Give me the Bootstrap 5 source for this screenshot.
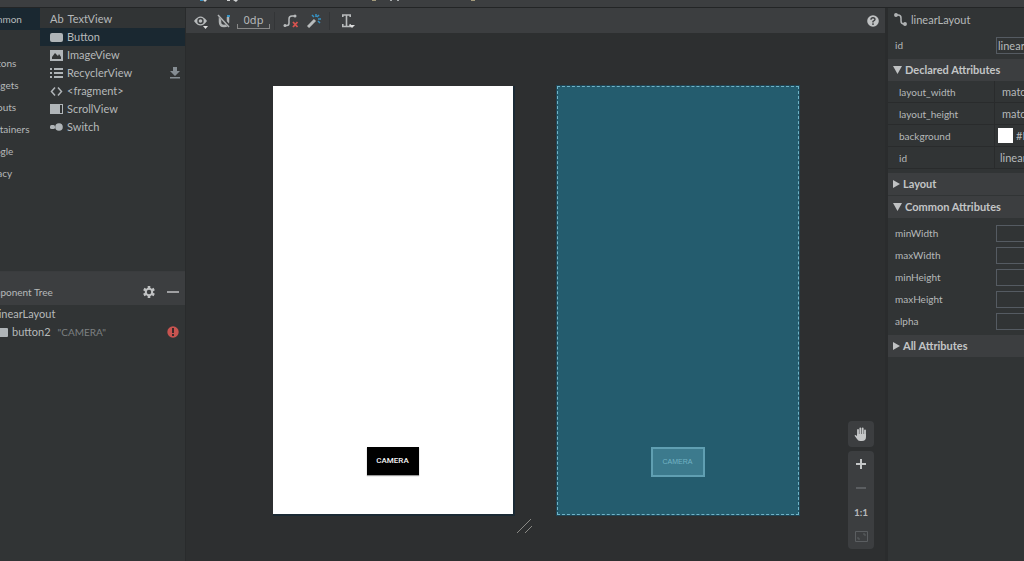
<!DOCTYPE html>
<html lang="en">
<head>
<meta charset="utf-8">
<meta name="viewport" content="width=device-width, initial-scale=1">
<title>Layout Editor</title>
<link href="https://cdn.jsdelivr.net/npm/bootstrap@5.3.0/dist/css/bootstrap.min.css" rel="stylesheet">
<style>
:root{--panel:#313435;--bar:#3c3e40;--dark:#2d2f30;--line:#292b2c;--fg:#b6b9ba;--sel:#1a2831}
body{background:var(--dark);color:var(--fg);font:11px/18px Lato,"Noto Sans",sans-serif;overflow:hidden}
button{border:0;background:none;color:inherit;padding:0;text-align:left}
svg{display:block;flex:none}
.topbar{height:8px;background:var(--bar);border-bottom:1px solid #232526;flex:none;overflow:hidden;padding-left:196px}
.side-l{width:186px;background:var(--panel);border-right:1px solid #292b2c;flex:none}
.side-r{width:139px;background:var(--panel);border-left:3px solid #2a2c2d;flex:none}
.palette{height:263px}
.cats{width:40px;flex:none}
.cats button,.cats .blank{display:block;width:64px;height:22px;margin-left:-18px;font-size:10px;line-height:22px}
.cats .on,.comps .on{background:var(--sel)}
.comps{padding-top:2px}
.comps button{height:18px;padding-left:10px;gap:4px;width:100%}
.tree-head{height:34px;background:var(--bar);border-top:1px solid #3a3c3e;font-size:10px;padding-top:7px}
.tree-head span{margin-left:-20px}
.tree-row{height:18px}
.tree-root{margin-left:-7px}
.hint{color:#7d8082;font-size:10px;margin-left:7px}
.err{margin-right:6px}
.tools{height:25px;background:var(--bar);flex:none}
.tools .gap-s{margin-left:6px}
.help{margin-right:6px}
.sep{width:1px;height:18px;background:#333537}
.margin-btn{width:33px;height:16px;text-align:center;border-bottom:1px solid #888;background:linear-gradient(#888,#888) left bottom/1px 4px no-repeat,linear-gradient(#888,#888) right bottom/1px 4px no-repeat;font:11px/14px "Noto Sans",sans-serif}
.canvas{padding-top:53px;gap:44px;background:var(--dark)}
.device{width:240px;height:428px;background:#fff;box-shadow:1px 1px 0 1px #1b2a34}
.blueprint{width:242px;height:429px;background:#245c6e;border:1px dashed #6fb4c8;outline:1px solid #1f4454}
.cam{bottom:39px;left:50%;transform:translateX(-50%);width:52px;height:28px;background:#000;color:#f4f4f4;font:500 8px/28px Roboto,sans-serif;text-align:center;box-shadow:0 1px 1px #999}
.blueprint .cam{bottom:37px;width:54px;height:30px;background:#3c7a8d;color:#72b3c4;font-family:"Liberation Sans",sans-serif;font-size:7px;line-height:26px;border:2px solid #609fb2;box-shadow:none}
.grip{left:243px;top:430px}
.zoomer{right:11px;bottom:12px;gap:4px}
.zoomer>div{background:#3c3e40;border-radius:4px;width:26px;padding:1px 0}
.zoomer button{width:26px;height:24px;display:flex;align-items:center;justify-content:center;font-weight:700;font-size:10px}
.root-name{height:23px;padding-left:6px;gap:4px}
.sect{display:flex;align-items:center;gap:3px;width:100%;height:22px;background:var(--bar);font-weight:700;padding-left:5px;color:#c3c5c6}
.attr{height:22px;font-size:10px;display:flex;align-items:center;border-bottom:1px solid var(--line);padding-left:11px}
.attr .lbl{width:95px;flex:none}
.attr .val{border-left:1px solid var(--line);height:21px;line-height:21px;padding-left:7px;font-size:11px}
.attr .sw{padding-left:3px;gap:3px}
.attr .idv{padding-left:5px}
.attr,.attr .val,.field label{white-space:nowrap}
.field{height:22px;display:flex;align-items:center;padding-left:7px;font-size:10px}
.field label{width:101px;flex:none}
.field input{width:160px;height:17px;flex:none;background:var(--panel);border:1px solid #555b62;color:var(--fg);padding:0 1px;font-size:11px;line-height:15px;border-radius:0}
.idrow{height:28px}
.swatch{width:15px;height:15px;background:#fff}
.common{margin-top:1px}
.fields{padding:4px 0 3px}
</style>
</head>
<body class="d-flex flex-column vh-100">
<div class="topbar"><svg width="290" height="7"><path d="M4 0h3v1H4z" fill="#3592c4"/><path d="M7 0h4L9 2zM31 0h3v1h-3zM37 0h5l-2 2z" fill="#d0d2d3"/><path d="M176 0h4v1h-4zM275 0h4v1h-4z" fill="#a39a7c"/><path d="M194 0h2v1h-2zM201 0h2v1h-2z" fill="#a8acae"/></svg></div>
<main class="d-flex flex-grow-1">
  <aside class="side-l d-flex flex-column overflow-hidden">
    <section class="palette d-flex">
      <div class="cats overflow-hidden">
        <button class="on">Common</button>
        <div class="blank"></div>
        <button>Buttons</button><button>Widgets</button><button>Layouts</button><button>Containers</button><button>Google</button><button>Legacy</button>
      </div>
      <div class="comps flex-grow-1">
        <button class="d-flex align-items-center"><span>Ab</span>TextView</button>
        <button class="on d-flex align-items-center"><svg width="13" height="10"><rect width="13" height="9" y="1" rx="2" fill="#b0b5b8"/></svg>Button</button>
        <button class="d-flex align-items-center"><svg width="13" height="11"><path fill="#b0b5b8" fill-rule="evenodd" d="M0 0h13v11H0zM2 9h9V7L9 4 8 6 5 3 2 7z"/></svg>ImageView</button>
        <button class="d-flex align-items-center"><svg width="13" height="10"><path fill="#b0b5b8" d="M0 0h2v2H0zM4 0h9v2H4zM0 4h2v2H0zM4 4h9v2H4zM0 8h2v2H0zM4 8h9v2H4z"/></svg>RecyclerView<svg class="ms-auto me-1" width="12" height="12"><path fill="#858d93" d="M4 0h4v4h3L6 9 1 4h3zM1 10h10v1.500H1z"/></svg></button>
        <button class="d-flex align-items-center"><svg width="13" height="9" fill="none" stroke="#b0b5b8" stroke-width="1.500"><path d="M5 .5 1.500 4.500 5 8.500M8 .5l3.500 4L8 8.500"/></svg>&lt;fragment&gt;</button>
        <button class="d-flex align-items-center"><svg width="13" height="10"><path fill="#b0b5b8" fill-rule="evenodd" d="M0 0h13v10H0zM10 1h2v8h-2z"/></svg>ScrollView</button>
        <button class="d-flex align-items-center"><svg width="13" height="8" fill="#b0b5b8"><rect y="2" width="5" height="4" rx="1.500"/><circle cx="9" cy="4" r="3.800"/></svg>Switch</button>
      </div>
    </section>
    <section>
      <header class="tree-head d-flex align-items-center">
        <span>Component Tree</span>
        <button class="ms-auto" aria-label="Settings"><svg width="12" height="12" viewBox="-6 -6 12 12"><path d="M0-6V6M-5.200-3 5.200 3M-5.200 3 5.200-3" stroke="#c0c2c3" stroke-width="2.600"/><circle r="3.200" fill="#3c3e40" stroke="#c0c2c3" stroke-width="2"/></svg></button>
        <button class="ms-2 ps-1 err" aria-label="Hide"><svg width="12" height="12"><path d="M0 6h12" stroke="#c0c2c3" stroke-width="1.500"/></svg></button>
      </header>
      <div class="tree-row d-flex"><span class="tree-root">LinearLayout</span></div>
      <div class="tree-row d-flex align-items-center"><svg width="8" height="9"><rect x="-4" width="12" height="9" rx="1" fill="#b0b5b8"/></svg><span class="ms-1">button2</span><span class="hint">"CAMERA"</span>
        <svg class="ms-auto err" width="12" height="12"><circle cx="6" cy="6" r="5.700" fill="#c75450"/><path d="M6 2v5M6 8v2" stroke="#3a2b2c" stroke-width="2"/></svg></div>
    </section>
  </aside>
  <section class="d-flex flex-column flex-grow-1 position-relative">
    <div class="tools d-flex align-items-center">
      <button class="ms-2" aria-label="View options"><svg width="15" height="16"><path d="M0 8q6.500-9 13 0-6.500 9-13 0z" fill="#b8bbbc"/><circle cx="6.500" cy="8" r="3.200" fill="#3c3e40"/><circle cx="6.500" cy="8" r="1.800" fill="#b8bbbc"/><path d="M9 13h5l-2.500 3z" fill="#ddd"/></svg></button>
      <button class="ms-2" aria-label="Autoconnect off"><svg width="14" height="14" fill="none"><path d="M3 3v5q0 4 4 4t4-4V3" stroke="#b0b3b4" stroke-width="2.500"/><path d="M1 0 13 13" stroke="#3c3e40" stroke-width="3"/><path d="M1 1 12 13" stroke="#b0b3b4" stroke-width="1.500"/><path d="M10 2h3" stroke="#3592c4" stroke-width="2"/></svg></button>
      <button class="margin-btn gap-s">0dp</button>
      <i class="sep ms-1"></i>
      <button class="ms-2" aria-label="Clear constraints"><svg width="16" height="14" fill="none"><path d="M1 11.500h3q2 0 2-2.500V5q0-3 3-3h3" stroke="#b8bbbc" stroke-width="1.500"/><circle cx="2" cy="11.500" r="1.500" fill="#b8bbbc"/><circle cx="12" cy="2" r="1.500" fill="#b8bbbc"/><path d="m10 8 4.500 5M14.500 8 10 13" stroke="#d9534f" stroke-width="1.800"/></svg></button>
      <button class="ms-2" aria-label="Infer constraints"><svg width="14" height="14"><path d="m1 13 7-7" stroke="#b8bbbc" stroke-width="3"/><path d="M9 0v3M12 1l-2 2M11 5h3M5 1l2 2M11 7l2 2" stroke="#3592c4" stroke-width="1.500"/></svg></button>
      <i class="sep ms-2"></i>
      <button class="ms-2 ps-1" aria-label="Guidelines"><svg width="13" height="16" fill="none"><path d="M.8 4V2h7.400v2M.8 11v2.500h7.400V11M4.500 2v11" stroke="#b8bbbc" stroke-width="1.600"/><path d="M7 12h6l-3 3z" fill="#ddd"/></svg></button>
      <button class="ms-auto help" aria-label="Help"><svg width="12" height="12"><circle cx="6" cy="6" r="5.800" fill="#c0c2c3"/><path d="M4 4.800q0-2 2-2t2 1.800q0 1-2 1.800v1M6 8.300V10" fill="none" stroke="#3c3e40" stroke-width="1.400"/></svg></button>
    </div>
    <div class="canvas d-flex flex-grow-1 justify-content-center align-items-start">
      <div class="device position-relative"><button class="cam position-absolute">CAMERA</button>
        <svg class="grip position-absolute" width="18" height="18" stroke="#8a8a86" stroke-width="1"><path d="M1 17 15 3M9 17l7-7"/></svg></div>
      <div class="blueprint position-relative"><button class="cam position-absolute">CAMERA</button></div>
    </div>
    <div class="zoomer position-absolute d-flex flex-column">
      <div><button aria-label="Pan"><svg width="14" height="15" viewBox="0 0 14 15"><path d="M4 9V3M6.300 8V1.300M8.700 8V1.500M11 9V3.300" stroke="#c5c7c8" stroke-width="1.800" stroke-linecap="round"/><path d="M3.100 7H12v3q0 4-4 4H6Q4 14 3 12L.6 8.800Q.8 7.400 2 8.200l1.100 1z" fill="#c5c7c8"/></svg></button></div>
      <div><button aria-label="Zoom in"><svg width="10" height="10"><path d="M5 0v10M0 5h10" stroke="#c5c7c8" stroke-width="2"/></svg></button><button aria-label="Zoom out"><svg width="10" height="10"><path d="M0 5h10" stroke="#5b5e61" stroke-width="2"/></svg></button><button>1:1</button><button aria-label="Zoom to fit"><svg width="13" height="11" fill="none" stroke="#5b5e61"><path d="M.5.5h12v10H.5zM3 8V6M3 8h2M10 3v2M10 3H8"/></svg></button></div>
    </div>
  </section>
  <aside class="side-r overflow-hidden">
    <div class="d-flex align-items-center root-name"><svg width="13" height="13" fill="none" stroke="#b0b3b4" stroke-width="1.500"><path d="M2 2h2q3 0 3 3v3q0 3 3 3h1"/><circle cx="2" cy="2" r="1.200" fill="#b0b3b4"/><circle cx="11" cy="11" r="1.200" fill="#b0b3b4"/></svg>linearLayout</div>
    <div class="field idrow"><label for="id">id</label><input id="id" value="linearLayout"></div>
    <button class="sect"><svg width="9" height="8"><path d="M0 0h9L4.500 8z" fill="#c0c2c3"/></svg>Declared Attributes</button>
    <div class="attr"><span class="lbl">layout_width</span><span class="val">match_parent</span></div>
    <div class="attr"><span class="lbl">layout_height</span><span class="val">match_parent</span></div>
    <div class="attr"><span class="lbl">background</span><span class="val sw d-flex align-items-center"><i class="swatch"></i>#FFFFFF</span></div>
    <div class="attr"><span class="lbl">id</span><span class="val idv">linearLayout</span></div>
    <button class="sect mt-1"><svg width="7" height="8"><path d="M0 0v8l7-4z" fill="#c0c2c3"/></svg>Layout</button>
    <button class="sect common"><svg width="9" height="8"><path d="M0 0h9L4.500 8z" fill="#c0c2c3"/></svg>Common Attributes</button>
    <div class="fields">
      <div class="field"><label for="minw">minWidth</label><input id="minw"></div>
      <div class="field"><label for="maxw">maxWidth</label><input id="maxw"></div>
      <div class="field"><label for="minh">minHeight</label><input id="minh"></div>
      <div class="field"><label for="maxh">maxHeight</label><input id="maxh"></div>
      <div class="field"><label for="alpha">alpha</label><input id="alpha"></div>
    </div>
    <button class="sect"><svg width="7" height="8"><path d="M0 0v8l7-4z" fill="#c0c2c3"/></svg>All Attributes</button>
  </aside>
</main>
<script src="https://cdn.jsdelivr.net/npm/bootstrap@5.3.0/dist/js/bootstrap.bundle.min.js"></script>
</body>
</html>
